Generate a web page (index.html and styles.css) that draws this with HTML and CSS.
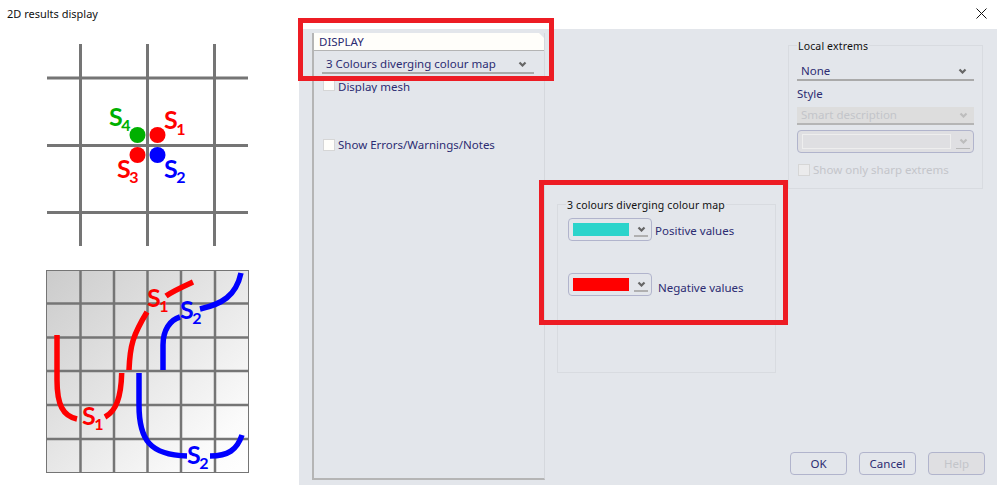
FILE: index.html
```html
<!DOCTYPE html>
<html lang="en">
<head>
<meta charset="utf-8">
<title>2D results display</title>
<link rel="stylesheet" href="styles.css">
</head>
<body>
<header class="titlebar">
  <span class="title">2D results display</span>
  <svg class="close" width="11" height="11" viewBox="0 0 11 11"><path d="M.5.5l10 10M10.5.5l-10 10" stroke="#111" stroke-width="1" fill="none"/></svg>
</header>
<main class="main">
  <aside class="figures">
    <svg class="fig-top" width="203" height="203" viewBox="46 44 203 203">
      <g class="grid-line">
        <path d="M80.500 44V246M147.500 44V246M214.500 44V246M47 78H248M47 145.500H248M47 212.500H248"/>
      </g>
      <circle cx="137.500" cy="135" r="8" fill="#00b000"/>
      <circle cx="157.500" cy="135" r="8" fill="#f00"/>
      <circle cx="137.500" cy="155" r="8" fill="#f00"/>
      <circle cx="157.500" cy="155" r="8" fill="#00f"/>
      <text class="fig-label c-green" x="109" y="126">S<tspan class="sub" dx="-1.500" dy="5">4</tspan></text>
      <text class="fig-label c-red" x="164" y="129">S<tspan class="sub" dx="-1.500" dy="6">1</tspan></text>
      <text class="fig-label c-red" x="117" y="178">S<tspan class="sub" dx="-1.500" dy="5">3</tspan></text>
      <text class="fig-label c-blue" x="164" y="178">S<tspan class="sub" dx="-1.500" dy="5">2</tspan></text>
    </svg>
    <svg class="fig-bottom" width="203" height="203" viewBox="46 270 203 203">
      <defs>
        <linearGradient id="shade" x1="0" y1="0" x2="1" y2="1">
          <stop offset="0" stop-color="#cbcbcb"/>
          <stop offset=".85" stop-color="#fbfbfb"/>
          <stop offset="1" stop-color="#fff"/>
        </linearGradient>
      </defs>
      <rect x="46.500" y="270.500" width="202" height="202" fill="url(#shade)" stroke="#757575"/>
      <g class="grid-line thin">
        <path d="M80.500 270V473M114 270V473M147.500 270V473M181 270V473M215 270V473M46 303.500H249M46 337.500H249M46 371H249M46 405H249M46 439H249"/>
      </g>
      <g class="curve c-stroke-red">
        <path d="M57 335V380C57 405 63 416 77 419"/>
        <path d="M105 417C116 411 121 398 121.700 373"/>
        <path d="M129 370C130 345 133 335 147 312"/>
        <path d="M166 296C173 291 182 287 193 282"/>
      </g>
      <g class="curve c-stroke-blue">
        <path d="M163 370V345C163 330 170 320 180 317"/>
        <path d="M200 309C222 304 236 296 241 273"/>
        <path d="M139 373V405C139 440 150 455 187 456"/>
        <path d="M210 456C228 456 237 450 242 435"/>
      </g>
      <text class="fig-label c-red" x="147" y="307">S<tspan class="sub" dx="-1.500" dy="5">1</tspan></text>
      <text class="fig-label c-red" x="82" y="425">S<tspan class="sub" dx="-1.500" dy="5">1</tspan></text>
      <text class="fig-label c-blue" x="180" y="319">S<tspan class="sub" dx="-1.500" dy="5">2</tspan></text>
      <text class="fig-label c-blue" x="187" y="464">S<tspan class="sub" dx="-1.500" dy="5">2</tspan></text>
    </svg>
  </aside>

  <section class="panel">
    <div class="sidebar">
      <div class="tab">DISPLAY</div>
      <div class="flat-select map-select"><span>3 Colours diverging colour map</span><svg class="chev" width="9" height="6" viewBox="0 0 9 6"><path d="M1.500 1.500l3 3 3-3"/></svg></div>
      <label class="check mesh-check"><span class="box"></span>Display mesh</label>
      <label class="check errors-check"><span class="box"></span>Show Errors/Warnings/Notes</label>
    </div>

    <div class="content">
      <div class="columns">
        <div class="group map-group">
          <div class="legend">3 colours diverging colour map</div>
          <div class="colour-row">
            <div class="combo"><span class="swatch teal"></span><span class="combo-arrow"><svg class="chev" width="9" height="6" viewBox="0 0 9 6"><path d="M1.500 1.500l3 3 3-3"/></svg></span></div>
            <span class="colour-label">Positive values</span>
          </div>
          <div class="colour-row neg">
            <div class="combo"><span class="swatch red"></span><span class="combo-arrow"><svg class="chev" width="9" height="6" viewBox="0 0 9 6"><path d="M1.500 1.500l3 3 3-3"/></svg></span></div>
            <span class="colour-label shifted">Negative values</span>
          </div>
        </div>

        <div class="group extrems-group">
          <div class="legend">Local extrems</div>
          <div class="flat-select none-select"><span>None</span><svg class="chev" width="9" height="6" viewBox="0 0 9 6"><path d="M1.500 1.500l3 3 3-3"/></svg></div>
          <div class="style-label">Style</div>
          <div class="flat-select off"><span>Smart description</span><svg class="chev" width="9" height="6" viewBox="0 0 9 6"><path d="M1.500 1.500l3 3 3-3"/></svg></div>
          <div class="combo wide off"><span class="swatch blank"></span><span class="combo-arrow"><svg class="chev" width="9" height="6" viewBox="0 0 9 6"><path d="M1.500 1.500l3 3 3-3"/></svg></span></div>
          <label class="check sharp-check off"><span class="box"></span>Show only sharp extrems</label>
        </div>
      </div>

      <div class="buttons">
        <button class="btn" type="button">OK</button>
        <button class="btn" type="button">Cancel</button>
        <button class="btn off" type="button">Help</button>
      </div>
    </div>

    <div class="callout callout-display"></div>
    <div class="callout callout-map"></div>
  </section>
</main>
</body>
</html>
```
FILE: styles.css
```css
* { box-sizing: border-box; }
html, body { margin: 0; padding: 0; }
body {
  width: 997px;
  height: 485px;
  overflow: hidden;
  background: #fff;
  display: flex;
  flex-direction: column;
  font: 11.5px/16px "Noto Sans", sans-serif;
  color: #2c2c72;
}

.titlebar {
  height: 29px;
  flex: none;
  display: flex;
  justify-content: space-between;
  padding: 6px 10px 0 7px;
}
.title { color: #111; font-size: 11px; }
.close { margin-top: 2px; }

.main { flex: 1; display: flex; min-height: 0; }

.figures {
  width: 299px;
  flex: none;
  padding: 15px 0 0 46px;
  display: flex;
  flex-direction: column;
  gap: 23px;
}
.figures svg { display: block; }
.grid-line path { stroke: #757575; stroke-width: 3; fill: none; }
.grid-line.thin path { stroke-width: 2.5; }
.curve path { fill: none; stroke-width: 5.5; }
.c-stroke-red path { stroke: #f00; }
.c-stroke-blue path { stroke: #00f; }
.fig-label { font: 700 25px "Lato", sans-serif; }
.fig-label .sub { font-size: 16px; }
.c-green { fill: #00b000; }
.c-red { fill: #f00; }
.c-blue { fill: #00f; }

.panel {
  flex: 1;
  position: relative;
  display: flex;
  background: #e3e6eb;
  padding: 4px 0 5px 13px;
}

.sidebar {
  width: 233px;
  flex: none;
  border-left: 2px solid #b5b5b5;
  border-bottom: 2px solid #b5b5b5;
  border-right: 1px solid #d5d8dd;
}
.tab {
  height: 18px;
  background: #fffefa;
  border-bottom: 1px solid #b4b4b4;
  padding: 1px 0 0 5px;
  line-height: 16px;
  clip-path: polygon(0 0, calc(100% - 5px) 0, 100% 5px, 100% 100%, 0 100%);
}

.flat-select {
  display: flex;
  justify-content: space-between;
  align-items: center;
  border-bottom: 2px solid #aaa;
}
.chev { flex: none; }
.chev path { fill: none; stroke: #666; stroke-width: 2.2; }
.map-select {
  margin: 5px 10px 0 8px;
  height: 18px;
  padding: 0 7px 0 4px;
}

.check { display: flex; align-items: center; }
.box {
  width: 12px;
  height: 12px;
  background: #fffefa;
  border: 1px solid #d6d6d6;
  margin-right: 3px;
  flex: none;
}
.mesh-check { margin: 5px 0 0 9px; height: 14px; overflow: hidden; align-items: flex-start; }
.errors-check { margin: 44px 0 0 9px; }

.content {
  flex: 1;
  display: flex;
  flex-direction: column;
  justify-content: space-between;
  padding-right: 12px;
  padding-left: 12px;
}
.columns { display: flex; gap: 12px; align-items: flex-start; }

.group { border: 1px solid #d8dbe0; }
.legend {
  width: fit-content;
  margin: -8px 0 0 8px;
  padding: 0 1px;
  background: #e3e6eb;
  color: #111;
  font-size: 10.5px;
  letter-spacing: .15px;
}

.map-group { width: 219px; height: 169px; margin-top: 171px; }
.colour-row { display: flex; align-items: center; gap: 3px; margin: 5px 0 0 10px; }
.colour-row.neg { margin-top: 32px; }
.colour-label { position: relative; top: 1px; }
.combo {
  width: 84px;
  height: 23px;
  flex: none;
  display: flex;
  align-items: center;
  border: 1px solid #b1b4cc;
  border-radius: 4px;
  padding: 0 3px 0 4px;
}
.swatch { height: 13px; flex: 1; }
.teal { background: #2bd4cb; }
.red { background: #f00; }
.combo-arrow {
  width: 14px;
  height: 14px;
  margin-left: 5px;
  display: flex;
  align-items: flex-start;
  justify-content: center;
  padding-top: 3px;
  border-bottom: 2px solid #b0b0b0;
}
.shifted { margin-left: 3px; top: 3px; }

.extrems-group { width: 195px; height: 144px; margin-top: 12px; padding: 0 8px; }
.extrems-group .legend { margin-left: 0; }
.none-select { height: 19px; margin-top: 8px; padding: 0 7px 0 4px; }
.style-label { margin-top: 5px; }
.flat-select.off {
  height: 18px;
  margin-top: 5px;
  padding: 0 6px 0 4px;
  background: #ddd;
  color: #c3c5ca;
  border-bottom-color: #b5b5b5;
}
.combo.wide { width: 177px; margin-top: 5px; background: #dfdfe2; }
.swatch.blank { height: 15px; border: 1px solid #eee; }
.off .chev path { stroke: #bdbdbd; }
.off .combo-arrow { border-bottom: 1px solid #b8b8b8; }
.sharp-check { margin: 9px 0 0 1px; }
.check.off { color: #c3c5ca; }
.check.off .box { background: #ebebec; }

.buttons { display: flex; justify-content: flex-end; gap: 12px; padding-bottom: 5px; }
.btn {
  width: 57px;
  height: 23px;
  padding: 0;
  font: inherit;
  color: inherit;
  background: transparent;
  border: 1px solid #b1b4cc;
  border-radius: 4px;
}
.btn.off { background: #dfdfe2; color: #c3c5ca; }

.callout { position: absolute; border: 5px solid #ed1c24; pointer-events: none; }
.callout-display { left: -1px; top: -11px; width: 256px; height: 63px; }
.callout-map { left: 240px; top: 151px; width: 249px; height: 145px; }
```
